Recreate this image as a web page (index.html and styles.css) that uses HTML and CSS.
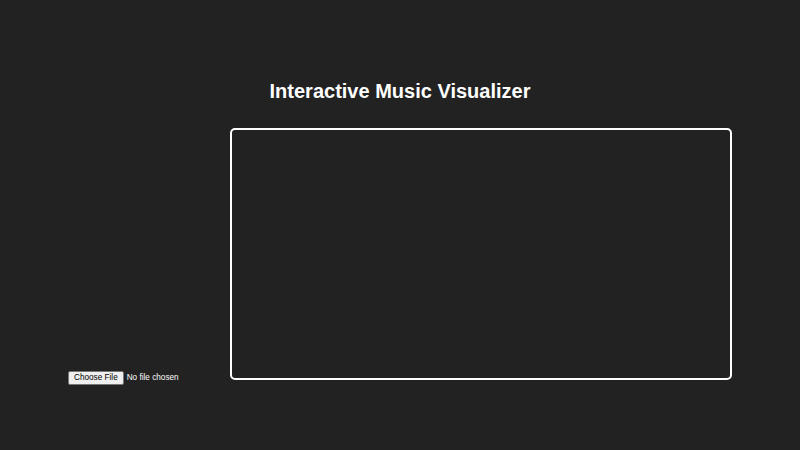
FILE: index.html
```html
<!DOCTYPE html>
<html>
<head>
<meta charset="utf-8">
<title>Interactive Music Visualizer</title>
<link rel="stylesheet" href="styles.css">
</head>
<body class="page">
<h1 class="title">Interactive Music Visualizer</h1>
<div class="stage">
<input type="file" class="file-input" accept="audio/*"><canvas class="visualizer" width="498" height="248"></canvas>
</div>
</body>
</html>
```
FILE: styles.css
```css
html, body {
  background: #222222;
}
.page {
  margin: 8px;
  padding-top: 40px;
  color: #ffffff;
  font-family: "Liberation Sans", Arial, sans-serif;
  text-align: center;
}
.title {
  font-size: 20px;
  font-weight: bold;
  margin: 32px 0 25px;
}
.stage {
  display: flex;
  justify-content: center;
  align-items: baseline;
  gap: 4px;
}
.file-input {
  width: 158px;
  color: #ffffff;
  font-family: "Liberation Sans", Arial, sans-serif;
  font-size: 8.2px;
  text-align: left;
}
.file-input::file-selector-button {
  font-family: "Liberation Sans", Arial, sans-serif;
  font-size: 8.2px;
  color: #000000;
  background: #efefef;
  border: 1px solid #767676;
  border-radius: 2px;
  padding: 1px 5px 2px;
  margin-right: 3px;
}
.visualizer {
  border: 2px solid #ffffff;
  border-radius: 5px;
  display: block;
}
```
